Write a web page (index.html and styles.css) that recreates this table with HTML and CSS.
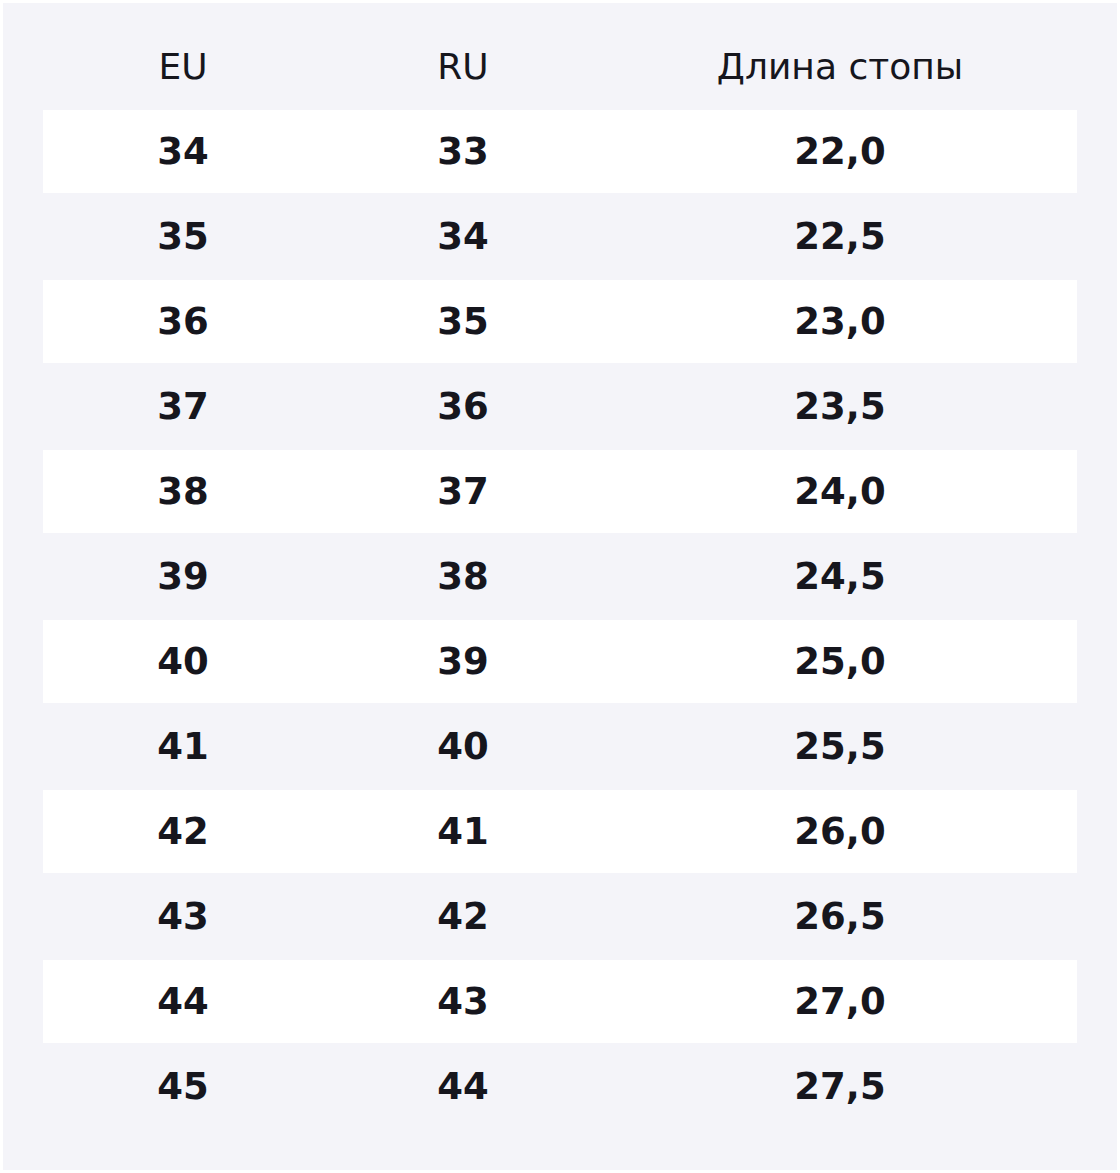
FILE: index.html
```html
<!DOCTYPE html>
<html lang="ru">
<head>
<meta charset="utf-8">
<title>Таблица размеров</title>
<link rel="stylesheet" href="styles.css">
</head>
<body>
<div class="sheet">
  <table class="sizes">
    <colgroup>
      <col class="c-eu"><col class="c-ru"><col class="c-len">
    </colgroup>
    <thead>
      <tr><th>EU</th><th>RU</th><th>Длина стопы</th></tr>
    </thead>
    <tbody>
      <tr><td>34</td><td>33</td><td>22,0</td></tr>
      <tr><td>35</td><td>34</td><td>22,5</td></tr>
      <tr><td>36</td><td>35</td><td>23,0</td></tr>
      <tr><td>37</td><td>36</td><td>23,5</td></tr>
      <tr><td>38</td><td>37</td><td>24,0</td></tr>
      <tr><td>39</td><td>38</td><td>24,5</td></tr>
      <tr><td>40</td><td>39</td><td>25,0</td></tr>
      <tr><td>41</td><td>40</td><td>25,5</td></tr>
      <tr><td>42</td><td>41</td><td>26,0</td></tr>
      <tr><td>43</td><td>42</td><td>26,5</td></tr>
      <tr><td>44</td><td>43</td><td>27,0</td></tr>
      <tr><td>45</td><td>44</td><td>27,5</td></tr>
    </tbody>
  </table>
</div>
</body>
</html>
```
FILE: styles.css
```css
html, body {
  margin: 0;
  padding: 0;
  background: #ffffff;
}
body {
  padding: 3px;
  font-family: "DejaVu Sans", "Noto Sans", sans-serif;
  color: #16161d;
}
.sheet {
  background: #f4f4f9;
  padding: 40px;
  height: 1167px;
  box-sizing: border-box;
}
.sizes {
  width: 100%;
  border-collapse: separate;
  border-spacing: 0 2px;
  table-layout: fixed;
}
.c-eu { width: 280px; }
.c-ru { width: 280px; }
.c-len { width: auto; }
.sizes th {
  font-weight: normal;
  font-size: 36px;
  height: 63px;
  padding: 0 0 20px 0;
  box-sizing: border-box;
  text-align: center;
  vertical-align: middle;
}
.sizes td {
  font-weight: bold;
  font-size: 37px;
  height: 83px;
  padding: 0;
  text-align: center;
  vertical-align: middle;
}
.sizes tbody tr:nth-child(odd) td {
  background: #ffffff;
}
```
